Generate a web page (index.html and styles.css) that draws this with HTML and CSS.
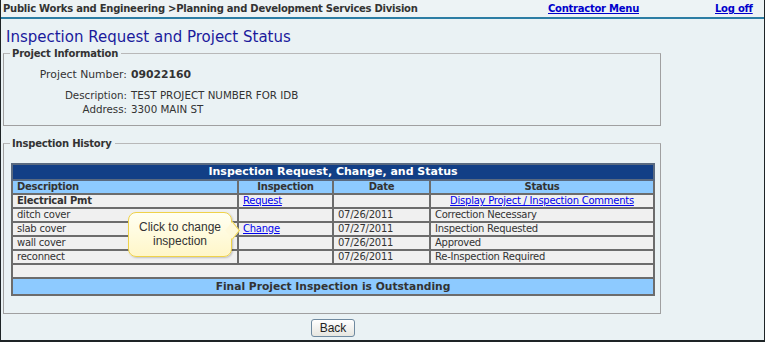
FILE: index.html
```html
<!DOCTYPE html>
<html>
<head>
<meta charset="utf-8">
<link rel="stylesheet" href="styles.css">
</head>
<body>
<div class="frame">
  <div class="topbar">
    <span class="crumb">Public Works and Engineering &gt;Planning and Development Services Division</span>
    <a class="toplink menu" href="#">Contractor Menu</a>
    <a class="toplink logoff" href="#">Log off</a>
  </div>
  <h1 class="title">Inspection Request and Project Status</h1>
  <fieldset class="group info">
    <legend>Project Information</legend>
    <div class="inforow first"><span class="lbl">Project Number:</span><span class="val bold">09022160</span></div>
    <div class="inforow gap"><span class="lbl">Description:</span><span class="val">TEST PROJECT NUMBER FOR IDB</span></div>
    <div class="inforow"><span class="lbl">Address:</span><span class="val">3300 MAIN ST</span></div>
  </fieldset>
  <fieldset class="group history">
    <legend>Inspection History</legend>
    <table class="grid">
      <colgroup><col class="c1"><col class="c2"><col class="c3"><col class="c4"></colgroup>
      <tr class="caption"><td colspan="4">Inspection Request, Change, and Status</td></tr>
      <tr class="head"><td>Description</td><td class="ctr">Inspection</td><td class="ctr">Date</td><td class="ctr">Status</td></tr>
      <tr><td class="bold">Electrical Pmt</td><td><a href="#">Request</a></td><td></td><td class="ctr"><a href="#">Display Project / Inspection Comments</a></td></tr>
      <tr><td>ditch cover</td><td></td><td>07/26/2011</td><td>Correction Necessary</td></tr>
      <tr><td>slab cover</td><td><a href="#">Change</a></td><td>07/27/2011</td><td>Inspection Requested</td></tr>
      <tr><td>wall cover</td><td></td><td>07/26/2011</td><td>Approved</td></tr>
      <tr><td>reconnect</td><td></td><td>07/26/2011</td><td>Re-Inspection Required</td></tr>
      <tr class="blank"><td colspan="4"></td></tr>
      <tr class="final"><td colspan="4">Final Project Inspection is Outstanding</td></tr>
    </table>
    <div class="callout">Click to change inspection<span class="tip"></span></div>
  </fieldset>
  <div class="actions"><button class="back">Back</button></div>
</div>
</body>
</html>
```
FILE: styles.css
```css
html, body { margin: 0; padding: 0; }
body { width: 765px; height: 342px; overflow: hidden; background: #1e2426; font-family: "DejaVu Sans", Verdana, sans-serif; }
.frame { position: relative; box-sizing: border-box; width: 763px; height: 340px; margin: 0 0 0 1px; background: #eaf2f4; color: #333; font-size: 10.3px; }
.topbar { display: flex; align-items: center; height: 17px; border-bottom: 2px solid #2c7da4; background: #edf3f5; padding-left: 2px; font-weight: bold; font-size: 10px; letter-spacing: -0.25px; }
.crumb { color: #333; width: 545px; }
.toplink { color: #0000cc; text-decoration: underline; }
.menu { width: 167px; }
.title { margin: 9px 0 0 5px; font-weight: normal; font-size: 15px; color: #1a1a9c; line-height: 18px; }
.group { position: relative; margin: 0 0 0 2px; width: 658px; box-sizing: border-box; border: 1px solid #a0a0a0; border-top-color: #b8b8b8; padding: 0; }
.group legend { font-weight: bold; padding: 0 3px 0 2px; margin-left: 6px; color: #333; font-size: 10px; letter-spacing: -0.2px; }
.info { margin-top: 2px; height: 78px; }
.inforow { display: flex; line-height: 14px; }
.inforow.first { margin-top: 8px; font-size: 10.8px; line-height: 16px; }
.inforow.gap { margin-top: 5px; }
.lbl { width: 123px; text-align: right; padding-right: 4px; }
.bold { font-weight: bold; }
.history { margin-top: 12px; height: 176px; }
.grid { margin: 14px 0 0 7px; width: 644px; table-layout: fixed; border-collapse: collapse; border: 2px solid #707070; font-size: 10px; letter-spacing: -0.25px; }
.grid col.c1 { width: 226px; }
.grid col.c2 { width: 95px; }
.grid col.c3 { width: 97px; }
.grid td { border: 2px solid #6c6c6c; background: #f0f0f0; height: 12px; padding: 0 4px; line-height: 12px; white-space: nowrap; overflow: hidden; }
.grid a { color: #0000ee; }
.grid .ctr { text-align: center; }
.caption td { background: #123f86; color: #fff; font-weight: bold; text-align: center; font-size: 11px; letter-spacing: 0; height: 14px; line-height: 14px; border-color: #5a6a80; }
.head td { background: #8dcaff; font-weight: bold; }
.blank td { height: 12px; }
.final td { background: #8dcaff; text-align: center; font-weight: bold; font-size: 10.7px; letter-spacing: 0; height: 15px; line-height: 15px; }
.callout { position: absolute; left: 124px; top: 63px; width: 104px; height: 45px; box-sizing: border-box; border: 1px solid #efd24a; border-radius: 8px; background: linear-gradient(#fffff2, #fff6c8); font-family: "Liberation Sans", Arial, sans-serif; font-size: 12px; line-height: 14px; color: #333; text-align: center; padding: 7px 4px 0; box-shadow: 1px 1px 2px rgba(0,0,0,0.2); }
.tip { position: absolute; right: -8px; top: 11px; width: 12px; height: 12px; background: #fff9da; border-top: 1px solid #efd24a; border-right: 1px solid #efd24a; transform: scaleX(0.8) rotate(45deg); }
.actions { display: flex; justify-content: center; margin: 5px 0 0 -99px; }
.back { font-family: "Liberation Sans", Arial, sans-serif; font-size: 12px; height: 18px; padding: 0 8px; border: 1px solid #6f8aa0; border-radius: 3px; background: linear-gradient(#ffffff, #e6e6e0); color: #222; }
```
